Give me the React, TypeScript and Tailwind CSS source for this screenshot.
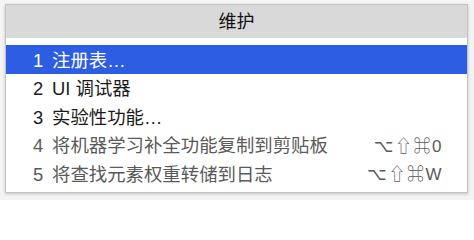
const items = [
  { n: '1', label: '注册表…', shortcut: '', active: true, dim: false },
  { n: '2', label: 'UI 调试器', shortcut: '', active: false, dim: false },
  { n: '3', label: '实验性功能…', shortcut: '', active: false, dim: false },
  { n: '4', label: '将机器学习补全功能复制到剪贴板', shortcut: '⌥⇧⌘0', active: false, dim: true },
  { n: '5', label: '将查找元素权重转储到日志', shortcut: '⌥⇧⌘W', active: false, dim: true },
];

export default function App() {
  return (
    <div
      className="w-[474px] h-[200px] bg-[#f4f4f4] pt-[4px] pl-[5px]"
      style={{ fontFamily: '"Liberation Sans", "Noto Sans CJK SC", "DejaVu Sans", sans-serif' }}
    >
      <div className="w-[463px] h-[189px] bg-white border border-[#c4c4c4] shadow-[0_1px_3px_rgba(0,0,0,0.2)] flex flex-col">
        {/* Title */}
        <div className="h-[33px] bg-[#d9d9d9] flex items-center justify-center pt-[1px] text-[18px] text-[#111]">
          维护
        </div>
        <div className="h-[7px]" />
        {/* Items */}
        {items.map((item) => (
          <div
            key={item.n}
            className={
              item.active
                ? 'h-[28.5px] flex items-center pt-[3px] pl-[27px] pr-[24px] bg-[#2d5de2] text-white text-[18.4px]'
                : item.dim
                ? 'h-[28.5px] flex items-center pt-[3px] pl-[27px] pr-[24px] text-[#5a5a5a] text-[18.4px]'
                : 'h-[28.5px] flex items-center pt-[3px] pl-[27px] pr-[24px] text-[#1a1a1a] text-[18.4px]'
            }
          >
            <span className="w-[19px]">{item.n}</span>
            <span className="flex-1">{item.label}</span>
            {item.shortcut && (
              <span className="text-[17px] tracking-[1.5px]">{item.shortcut}</span>
            )}
          </div>
        ))}
      </div>
    </div>
  );
}
